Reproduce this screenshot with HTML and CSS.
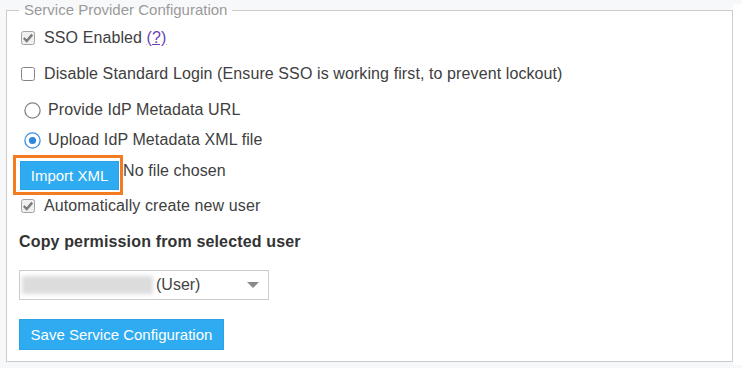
FILE: index.html
```html
<!DOCTYPE html>
<html>
<head>
<meta charset="utf-8">
<link rel="stylesheet" href="styles.css">
</head>
<body>
<div class="page">
  <div class="main">
    <fieldset class="panel">
      <legend class="legend">Service Provider Configuration</legend>
      <div class="row row-sso">
        <svg class="cb" width="14" height="14" viewBox="0 0 14 14"><rect x="0.5" y="0.5" width="13" height="13" rx="2" fill="#efefef" stroke="#a3a3a3"/><path d="M2.8 7 L5.7 10 L11.2 3.6" fill="none" stroke="#7a7a7a" stroke-width="2.4"/></svg>
        <span class="label">SSO Enabled <a class="help" href="#">(?)</a></span>
      </div>
      <div class="row row-gap">
        <svg class="cb" width="14" height="14" viewBox="0 0 14 14"><rect x="0.5" y="0.5" width="13" height="13" rx="2" fill="#fff" stroke="#858585"/></svg>
        <span class="label">Disable Standard Login (Ensure SSO is working first, to prevent lockout)</span>
      </div>
      <div class="row row-gap radio-row">
        <svg class="rb" width="17" height="17" viewBox="0 0 17 17"><circle cx="8.5" cy="8.5" r="7.6" fill="#fff" stroke="#858585" stroke-width="1.3"/></svg>
        <span class="label">Provide IdP Metadata URL</span>
      </div>
      <div class="row row-gap-s radio-row">
        <svg class="rb" width="17" height="17" viewBox="0 0 17 17"><circle cx="8.5" cy="8.5" r="7.6" fill="#fff" stroke="#3b8ee3" stroke-width="1.3"/><circle cx="8.5" cy="8.5" r="3.6" fill="#2f86de"/></svg>
        <span class="label">Upload IdP Metadata XML file</span>
      </div>
      <div class="file-row">
        <span class="focus-ring"><button class="btn btn-import" type="button">Import XML</button></span>
        <span class="nofile">No file chosen</span>
      </div>
      <div class="row row-auto">
        <svg class="cb" width="14" height="14" viewBox="0 0 14 14"><rect x="0.5" y="0.5" width="13" height="13" rx="2" fill="#efefef" stroke="#a3a3a3"/><path d="M2.8 7 L5.7 10 L11.2 3.6" fill="none" stroke="#7a7a7a" stroke-width="2.4"/></svg>
        <span class="label">Automatically create new user</span>
      </div>
      <div class="row row-gap heading">Copy permission from selected user</div>
      <div class="select">
        <span class="blurred"></span>
        <span class="sel-text">(User)</span>
        <span class="arrow"></span>
      </div>
      <div class="save-row">
        <button class="btn btn-save" type="button">Save Service Configuration</button>
      </div>
    </fieldset>
  </div>
  <div class="edge"></div>
</div>
</body>
</html>
```

FILE: styles.css
```css
html, body {
  margin: 0;
  padding: 0;
}
body {
  background: #f7f8fa;
  font-family: "Liberation Sans", Arial, sans-serif;
  font-size: 16px;
  color: #404040;
  width: 742px;
  height: 368px;
  overflow: hidden;
}
.page {
  display: flex;
  height: 368px;
}
.main {
  width: 733px;
}
.edge {
  width: 9px;
  background: #ffffff;
  margin: 4px 0 3px 0;
}
.panel {
  margin: 1px 0 0 6px;
  width: 727px;
  box-sizing: border-box;
  border: 1px solid #cccccc;
  background: #ffffff;
  padding: 7px 12px 11px 12px;
  display: flex;
  flex-direction: column;
  min-width: 0;
}
.legend {
  padding: 0 5px;
  font-size: 15px;
  line-height: 18px;
  color: #9a9a9a;
}
.row {
  display: flex;
  align-items: center;
  height: 24px;
  line-height: 24px;
  letter-spacing: 0.1px;
}
.row-gap { margin-top: 12px; }
.row-gap-s { margin-top: 6px; }
.cb {
  margin: 0 9px 0 2px;
  flex: none;
}
.radio-row .rb {
  margin: 0 7px 0 5px;
  flex: none;
}
.label { white-space: nowrap; }
.help {
  color: #6b3fb3;
  text-decoration: underline;
}
.file-row {
  display: flex;
  align-items: flex-start;
  margin-top: 3px;
  height: 39px;
  margin-left: -6px;
}
.focus-ring {
  display: flex;
  border: 3px solid #f47b20;
  padding: 3px 1px 2px 4px;
}
.btn {
  font-family: "Liberation Sans", Arial, sans-serif;
  font-size: 15px;
  color: #ffffff;
  background: #2eabf1;
  border: 1px solid #2aa2e6;
  border-radius: 0;
  padding: 0;
  margin: 0;
}
.btn-import {
  width: 99px;
  height: 29px;
}
.nofile {
  line-height: 24px;
  margin-top: 4px;
  letter-spacing: 0.1px;
}
.row-auto {
  margin-top: 0;
}
.heading {
  font-weight: bold;
  color: #333333;
  letter-spacing: 0.15px;
}
.select {
  margin-top: 16px;
  width: 250px;
  height: 30px;
  box-sizing: border-box;
  border: 1px solid #cccccc;
  display: flex;
  align-items: center;
  padding-left: 2px;
}
.blurred {
  width: 131px;
  height: 18px;
  background: #dcdcdc;
  filter: blur(2px);
  margin-right: 3px;
}
.sel-text {
  color: #444444;
}
.arrow {
  margin-left: auto;
  margin-right: 9px;
  width: 0;
  height: 0;
  border-left: 6px solid transparent;
  border-right: 6px solid transparent;
  border-top: 6px solid #8a8a8a;
}
.save-row {
  margin-top: 19px;
  display: flex;
}
.btn-save {
  width: 205px;
  height: 31px;
}
```
